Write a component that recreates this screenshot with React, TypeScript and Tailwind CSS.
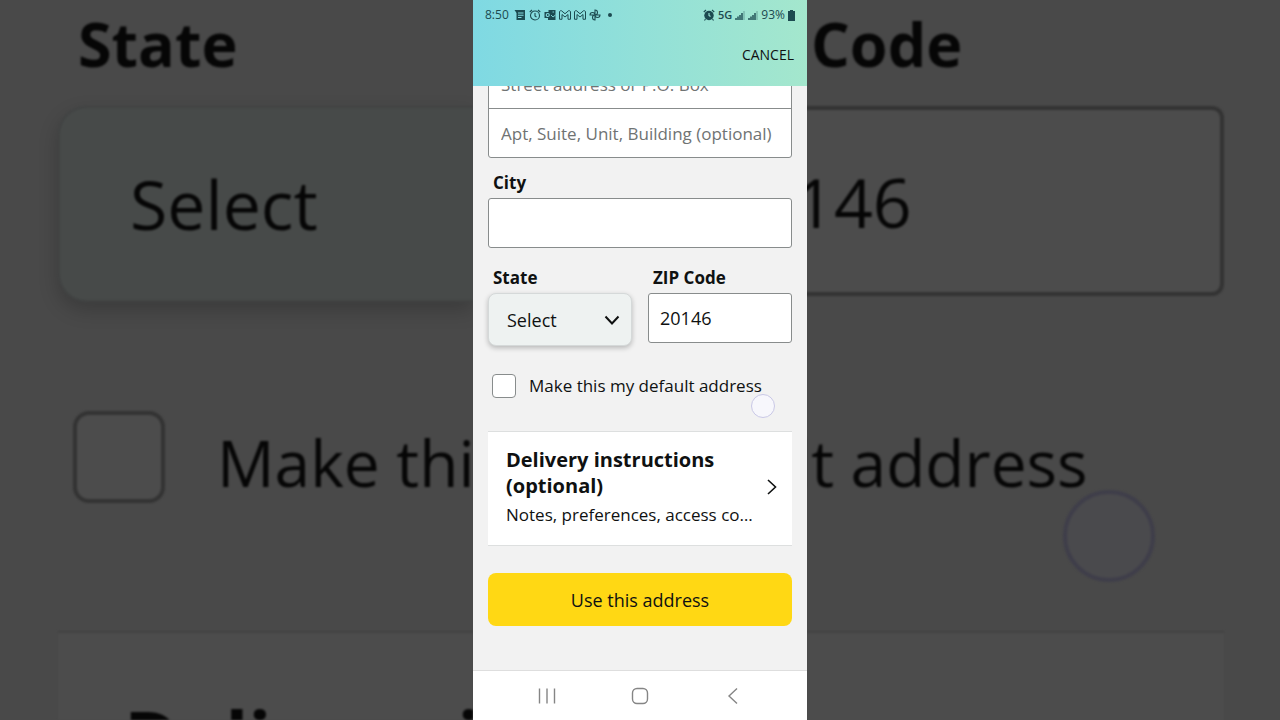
import type { ReactNode } from "react";

const font = "font-['Open_Sans','Noto_Sans',sans-serif]";

function StatusIcon({ children }: { children: ReactNode }) {
  return (
    <svg
      viewBox="0 0 24 24"
      className="size-3 shrink-0"
      fill="none"
      stroke="currentColor"
      strokeWidth="2.2"
      aria-hidden="true"
    >
      {children}
    </svg>
  );
}

function GmailIcon() {
  return (
    <StatusIcon>
      <path
        d="M1 20.500V5l2-1.500h2l7 6 7-6h2L23 5v15.500h-5V11l-6 5-6-5v9.500z"
        strokeWidth="2"
        strokeLinejoin="round"
      />
    </StatusIcon>
  );
}

function SignalIcon() {
  return (
    <svg viewBox="0 0 10 11" className="h-[11px] w-[10px]" aria-hidden="true">
      <path d="M1 10V8M3 10V6.500M5 10V5M7 10V3" stroke="currentColor" strokeWidth="1.400" />
      <path d="M9 10V1" stroke="currentColor" strokeWidth="1.400" opacity="0.3" />
    </svg>
  );
}

function StatusBar() {
  return (
    <div className="flex h-[30px] items-center justify-between px-3 text-xs text-[#1c4a50]">
      <div className="flex items-center gap-[3px]">
        <span className="mr-[2px]">8:50</span>
        <StatusIcon>
          <path d="M1 2h21v20H5V8z" fill="currentColor" stroke="none" />
          <path d="M8 8h11M8 12.500h11M8 17h7" stroke="#84dce0" />
        </StatusIcon>
        <StatusIcon>
          <circle cx="12" cy="13" r="9" />
          <path d="M12 8v6l3 2M1.500 6 6 2M22.500 6 18 2" />
        </StatusIcon>
        <StatusIcon>
          <path d="M9 2h14v20H8v-4h6V6H9z" fill="currentColor" stroke="none" />
          <path d="M1 6h13v12H1z" fill="currentColor" stroke="none" />
          <circle cx="7.500" cy="12" r="3" stroke="#84dce0" />
          <path d="m14 12 4 4 5-4M17 6h3" stroke="#84dce0" strokeWidth="1.800" />
        </StatusIcon>
        <GmailIcon />
        <GmailIcon />
        <StatusIcon>
          <path d="M12 12V2a5 5 0 0 1 0 10zM12 12h10a5 5 0 0 1-10 0zM12 12v10a5 5 0 0 1 0-10zM12 12H2a5 5 0 0 1 10 0z" />
        </StatusIcon>
        <span className="ml-1 size-1 rounded-full bg-current" />
      </div>
      <div className="flex items-center gap-[3px]">
        <StatusIcon>
          <circle cx="12" cy="13" r="9.500" fill="currentColor" stroke="none" />
          <path d="M12 8v5l3 2" stroke="#9be5d3" />
          <path d="M1.500 6 6 2M22.500 6 18 2M5 20l-2 3M19 20l2 3" />
        </StatusIcon>
        <span className="text-[11px] font-semibold">5G</span>
        <SignalIcon />
        <SignalIcon />
        <span>93%</span>
        <svg viewBox="0 0 7 11" className="h-[11px] w-[7px]" fill="currentColor" aria-hidden="true">
          <path d="M2 0h3v1h2v10H0V1h2z" />
        </svg>
      </div>
    </div>
  );
}

/* Dimmed close-ups of the form that fill the space either side of the phone */

function BackdropLeft() {
  return (
    <div inert className="min-w-0 overflow-hidden pl-[58px] text-[#060606] blur-[1px]">
      <label
        htmlFor="backdrop-state"
        className="block pl-5 text-[61px] font-bold leading-[88px]"
      >
        State
      </label>
      <select
        id="backdrop-state"
        className="mt-[18px] block h-[196px] w-full appearance-none rounded-l-[28px] border-2 border-r-0 border-[#414343] bg-[#474a49] pl-[70px] text-[68px] shadow-[0_8px_20px_rgba(0,0,0,0.2)]"
      >
        <option>Select</option>
      </select>
      <label className="mt-[109px] flex items-start gap-[52px] pl-[15px] text-[64px] leading-[104px]">
        <input
          type="checkbox"
          className="size-[92px] shrink-0 appearance-none rounded-2xl border-4 border-[#333] bg-[#4c4c4c]"
        />
        <span className="whitespace-nowrap">Make thi</span>
      </label>
      <div className="mt-[116px] border-t-2 border-[#434343] bg-[#4c4c4c] pl-[66px] pt-[54px]">
        <h2 className="whitespace-nowrap text-[76px] font-bold leading-[100px]">Delivery i</h2>
      </div>
    </div>
  );
}

function BackdropRight() {
  return (
    <div inert className="relative min-w-0 pr-14 text-[#060606] blur-[1px]">
      <label
        htmlFor="backdrop-zip"
        className="block pl-1 text-[61px] font-bold leading-[88px]"
      >
        Code
      </label>
      {/* the field and the sentence start behind the phone */}
      <div className="-ml-3">
        <input
          id="backdrop-zip"
          defaultValue="146"
          className="mt-[18px] block h-[190px] w-full rounded-r-xl border-4 border-l-0 border-[#333] bg-[#4c4c4c] text-[68px]"
        />
        <p className="mt-[115px] whitespace-nowrap text-[64px] leading-[104px]">lt address</p>
      </div>
      <div className="mt-[116px] h-[100px] border-t-2 border-[#434343] bg-[#4c4c4c]" />
      <span className="absolute left-64 top-[490px] size-[92px] rounded-full border-4 border-[#3f3e4a] bg-[#4a4a4d]" />
    </div>
  );
}

function AddressForm() {
  return (
    <form className="relative shrink-0 px-[15px] pb-11 text-[17px] text-[#0f1111]">
      <div className="overflow-hidden rounded-[3px] border border-[#888c8c] bg-white">
        <input
          aria-label="Street address or P.O. Box"
          placeholder="Street address or P.O. Box"
          className="block h-12 w-full border-b border-[#888c8c] px-3 placeholder:text-[#6f7373]"
        />
        <input
          aria-label="Apt, Suite, Unit, Building (optional)"
          placeholder="Apt, Suite, Unit, Building (optional)"
          className="block h-12 w-full px-3 placeholder:text-[#6f7373]"
        />
      </div>

      <label htmlFor="city" className="mt-[13px] block pl-[5px] font-bold leading-6">
        City
      </label>
      <input
        id="city"
        className="mt-[3px] block h-[50px] w-full rounded-[3px] border border-[#888c8c] bg-white px-3"
      />

      <div className="mt-[18px] grid grid-cols-2 gap-4">
        <div>
          <label htmlFor="state" className="block pl-[5px] font-bold leading-6">
            State
          </label>
          <div className="relative mt-[3px]">
            <select
              id="state"
              className="block h-[53px] w-full appearance-none rounded-lg border border-[#d5d9d9] bg-[#eef2f1] pl-[18px] text-lg shadow-[0_2px_5px_rgba(15,17,17,0.25)]"
            >
              <option>Select</option>
            </select>
            <svg
              viewBox="0 0 16 10"
              className="pointer-events-none absolute right-3 top-[22px] h-[10px] w-4"
              fill="none"
              stroke="currentColor"
              strokeWidth="2"
              aria-hidden="true"
            >
              <path d="m1.500 1.500 6.500 7 6.500-7" />
            </svg>
          </div>
        </div>
        <div>
          <label htmlFor="zip" className="block pl-[5px] font-bold leading-6">
            ZIP Code
          </label>
          <input
            id="zip"
            defaultValue="20146"
            className="mt-[3px] block h-[50px] w-full rounded-[3px] border border-[#888c8c] bg-white px-[11px] text-lg"
          />
        </div>
      </div>

      <label className="mt-7 flex items-center gap-[13px] pl-1 leading-6">
        <input
          type="checkbox"
          className="size-6 shrink-0 appearance-none rounded border border-[#888c8c] bg-white"
        />
        <span className="whitespace-nowrap">Make this my default address</span>
      </label>

      <button
        type="button"
        className="mt-[33px] flex w-full items-center gap-3 border-y border-[#dddfdf] bg-white pb-[18px] pl-[18px] pr-[15px] pt-[15px] text-left"
      >
        <span className="min-w-0 flex-1">
          <span className="block text-xl font-bold leading-[26px]">
            Delivery instructions (optional)
          </span>
          <span className="mt-1 block truncate leading-6">
            Notes, preferences, access codes and more
          </span>
        </span>
        <svg
          viewBox="0 0 10 16"
          className="h-4 w-[10px] shrink-0"
          fill="none"
          stroke="currentColor"
          strokeWidth="1.600"
          aria-hidden="true"
        >
          <path d="m1 1 7.500 7L1 15" />
        </svg>
      </button>

      <button
        type="submit"
        className="mt-[27px] block h-[53px] w-full rounded-lg bg-[#ffd814] text-lg"
      >
        Use this address
      </button>

      {/* touch indicator */}
      <span className="pointer-events-none absolute bottom-[252px] right-8 size-6 rounded-full border border-[#c9c8e6] bg-[#f7f7fd]/90" />
    </form>
  );
}

function NavBar() {
  return (
    <nav className="flex h-[50px] shrink-0 items-center justify-around border-t border-[#dedede] bg-white px-[27px] text-[#858585]">
      <button type="button" aria-label="Recent apps">
        <svg viewBox="0 0 18 18" className="size-[18px]" fill="none" stroke="currentColor" strokeWidth="1.400">
          <path d="M1.500 1.500v15M9 1.500v15M16.500 1.500v15" />
        </svg>
      </button>
      <button type="button" aria-label="Home">
        <svg viewBox="0 0 18 18" className="size-[18px]" fill="none" stroke="currentColor" strokeWidth="1.400">
          <rect x="1.500" y="1.500" width="15" height="15" rx="4.500" />
        </svg>
      </button>
      <button type="button" aria-label="Back">
        <svg viewBox="0 0 18 18" className="size-[18px]" fill="none" stroke="currentColor" strokeWidth="1.400">
          <path d="M13 1.500 5 9l8 7.500" />
        </svg>
      </button>
    </nav>
  );
}

export default function App() {
  return (
    <div
      className={`grid h-screen grid-cols-[minmax(0,1fr)_auto_minmax(0,1fr)] grid-rows-[100vh] overflow-hidden bg-[#494949] ${font}`}
    >
      <BackdropLeft />
      <div className="relative z-10 flex aspect-[334/720] h-screen min-w-0 flex-col bg-[#f2f2f2]">
        <header className="z-10 h-[86px] shrink-0 bg-linear-to-r from-[#7fd9e3] to-[#a4e7cd]">
          <StatusBar />
          <div className="flex h-[50px] items-center justify-end px-[13px]">
            <button type="button" className="text-sm font-medium text-[#0f1111]">
              CANCEL
            </button>
          </div>
        </header>
        {/* scrolled to the end, so the first field runs under the header */}
        <main className="flex min-h-0 flex-1 flex-col justify-end overflow-hidden">
          <AddressForm />
        </main>
        <NavBar />
      </div>
      <BackdropRight />
    </div>
  );
}
